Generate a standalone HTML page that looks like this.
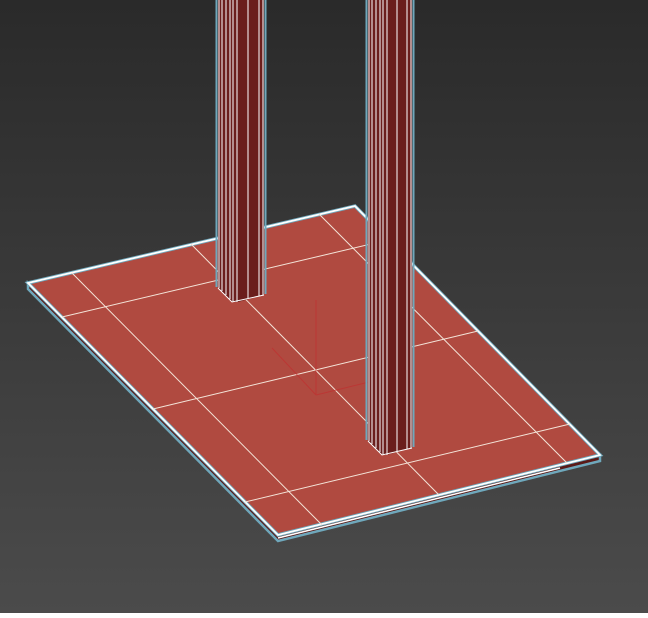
<!DOCTYPE html>
<html><head><style>html,body{margin:0;padding:0}body{width:648px;height:613px;overflow:hidden}</style></head>
<body>
<svg width="648" height="613" viewBox="0 0 648 613" xmlns="http://www.w3.org/2000/svg">
<defs>
<linearGradient id="bg" x1="0" y1="0" x2="0" y2="1">
<stop offset="0" stop-color="#2a2a2a"/><stop offset="1" stop-color="#4b4b4b"/>
</linearGradient>
</defs>
<rect width="648" height="613" fill="url(#bg)"/>
<!-- plate thickness -->
<polygon points="28,283 278,535 600,455 600,461 278,541 28,289" fill="#5a1a18" stroke="#6fa8bc" stroke-width="2.5"/>
<polyline points="278,538 560,468" stroke="#fff" stroke-width="1.5" fill="none"/>
<!-- plate top -->
<polygon points="28,283 355,206 600,455 278,535" fill="#b04a40" stroke="#6fa8bc" stroke-width="3.5"/>
<polygon points="28,283 355,206 600,455 278,535" fill="none" stroke="#ffffff" stroke-width="1.8"/>
<g stroke="#f4e4d8" stroke-width="1" fill="none">
<line x1="62" y1="317" x2="388" y2="240"/>
<line x1="153" y1="409" x2="478" y2="331"/>
<line x1="245" y1="502" x2="570" y2="424"/>
<line x1="72" y1="273" x2="322" y2="525"/>
<line x1="191" y1="244" x2="439" y2="495"/>
<line x1="319" y1="214" x2="567" y2="463"/>
</g>
<g stroke="#c03030" stroke-width="1" fill="none" opacity="0.7">
<line x1="316" y1="300" x2="316" y2="395"/>
<line x1="316" y1="395" x2="410" y2="372"/>
<line x1="316" y1="395" x2="272" y2="348"/>
</g>
<!-- left column -->
<g>
<line x1="216.5" y1="0" x2="216.5" y2="287" stroke="#6fa8bc" stroke-width="2"/>
<line x1="265.5" y1="0" x2="265.5" y2="294" stroke="#6fa8bc" stroke-width="2"/>
<polygon points="218,0 264,0 264,295 238,302 232,302 218,288" fill="#6a1e1c"/>
<g stroke="#fff" stroke-width="1">
<line x1="219" y1="0" x2="219" y2="288"/>
<line x1="222" y1="0" x2="222" y2="291"/>
<line x1="226" y1="0" x2="226" y2="295"/>
<line x1="230" y1="0" x2="230" y2="299"/>
<line x1="233" y1="0" x2="233" y2="302"/>
<line x1="237" y1="0" x2="237" y2="302"/>
<line x1="248" y1="0" x2="248" y2="298"/>
<line x1="259" y1="0" x2="259" y2="296"/>
<line x1="263" y1="0" x2="263" y2="295"/>
<polyline points="218,288 232,302 264,295" fill="none"/>
</g>
</g>
<!-- right column -->
<g>
<line x1="366.5" y1="0" x2="366.5" y2="440" stroke="#6fa8bc" stroke-width="2"/>
<line x1="413.5" y1="0" x2="413.5" y2="447" stroke="#6fa8bc" stroke-width="2"/>
<polygon points="368,0 412,0 412,448 386,455 382,455 368,441" fill="#6a1e1c"/>
<g stroke="#fff" stroke-width="1">
<line x1="369" y1="0" x2="369" y2="441"/>
<line x1="372" y1="0" x2="372" y2="444"/>
<line x1="376" y1="0" x2="376" y2="448"/>
<line x1="380" y1="0" x2="380" y2="452"/>
<line x1="383" y1="0" x2="383" y2="455"/>
<line x1="387" y1="0" x2="387" y2="455"/>
<line x1="397" y1="0" x2="397" y2="452"/>
<line x1="407" y1="0" x2="407" y2="449"/>
<line x1="411" y1="0" x2="411" y2="448"/>
<polyline points="368,441 382,455 412,448" fill="none"/>
</g>
</g>
</svg>
</body></html>
